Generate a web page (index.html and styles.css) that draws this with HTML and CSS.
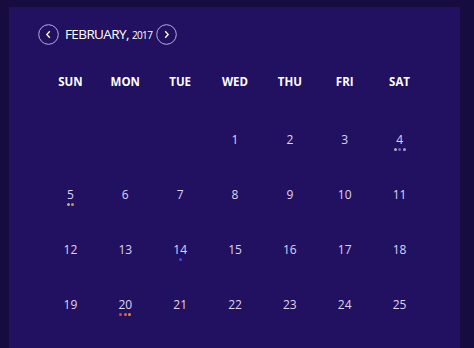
FILE: index.html
```html
<!DOCTYPE html>
<html>
<head>
<meta charset="utf-8">
<link rel="stylesheet" href="styles.css">
</head>
<body>
<div class="panel">
  <div class="header">
    <span class="nav">
      <svg width="21" height="21" viewBox="0 0 21 21"><circle cx="10.5" cy="10.5" r="9.8" fill="none" stroke="#b9aee0" stroke-width="1"/><path d="M11.8 7.3 L8.8 10.5 L11.8 13.7" fill="none" stroke="#ffffff" stroke-width="1.3"/></svg>
    </span>
    <span class="title">FEBRUARY,<span class="year">2017</span></span>
    <span class="nav">
      <svg width="21" height="21" viewBox="0 0 21 21"><circle cx="10.5" cy="10.5" r="9.8" fill="none" stroke="#b9aee0" stroke-width="1"/><path d="M9.2 7.3 L12.2 10.5 L9.2 13.7" fill="none" stroke="#ffffff" stroke-width="1.3"/></svg>
    </span>
  </div>
  <div class="dow">
    <div>SUN</div><div>MON</div><div>TUE</div><div>WED</div><div>THU</div><div>FRI</div><div>SAT</div>
  </div>
  <div class="weeks">
    <div class="cell"></div><div class="cell"></div><div class="cell"></div>
    <div class="cell"><span class="num">1</span></div>
    <div class="cell"><span class="num">2</span></div>
    <div class="cell"><span class="num">3</span></div>
    <div class="cell"><span class="num">4</span><span class="dots"><i class="d-sage"></i><i class="d-blue"></i><i class="d-pink"></i></span></div>
    <div class="cell"><span class="num">5</span><span class="dots"><i class="d-sand"></i><i class="d-orange"></i></span></div>
    <div class="cell"><span class="num">6</span></div>
    <div class="cell"><span class="num">7</span></div>
    <div class="cell"><span class="num">8</span></div>
    <div class="cell"><span class="num">9</span></div>
    <div class="cell"><span class="num">10</span></div>
    <div class="cell"><span class="num">11</span></div>
    <div class="cell"><span class="num">12</span></div>
    <div class="cell"><span class="num">13</span></div>
    <div class="cell"><span class="num">14</span><span class="dots"><i class="d-royal"></i></span></div>
    <div class="cell"><span class="num">15</span></div>
    <div class="cell"><span class="num">16</span></div>
    <div class="cell"><span class="num">17</span></div>
    <div class="cell"><span class="num">18</span></div>
    <div class="cell"><span class="num">19</span></div>
    <div class="cell"><span class="num">20</span><span class="dots"><i class="d-red"></i><i class="d-coral"></i><i class="d-orange"></i></span></div>
    <div class="cell"><span class="num">21</span></div>
    <div class="cell"><span class="num">22</span></div>
    <div class="cell"><span class="num">23</span></div>
    <div class="cell"><span class="num">24</span></div>
    <div class="cell"><span class="num">25</span></div>
  </div>
</div>
</body>
</html>
```
FILE: styles.css
```css
html, body {
  margin: 0;
  padding: 0;
  background: #160c3f;
  overflow: hidden;
  height: 100%;
}
body {
  font-family: "Open Sans", "Noto Sans", sans-serif;
}
.panel {
  margin: 7px 14px 0 9px;
  min-height: 341px;
  background: #221160;
  padding: 17px 33px 0 34px;
  box-sizing: border-box;
}
.header {
  display: flex;
  align-items: center;
  height: 21px;
  margin-left: -5px;
}
.nav {
  display: flex;
  width: 21px;
  height: 21px;
}
.title {
  color: #ffffff;
  font-size: 13.5px;
  line-height: 21px;
  letter-spacing: -0.6px;
  margin: 0 4px 0 6px;
}
.year {
  font-size: 10px;
  letter-spacing: -0.6px;
  margin-left: 3px;
}
.dow {
  display: grid;
  grid-template-columns: repeat(7, 1fr);
  margin-top: 28px;
  height: 17px;
  line-height: 17px;
  color: #ffffff;
  font-weight: 700;
  font-size: 11.5px;
  text-align: center;
}
.weeks {
  display: grid;
  grid-template-columns: repeat(7, 1fr);
  grid-auto-rows: 55px;
  margin-top: 22px;
}
.cell {
  display: flex;
  flex-direction: column;
  align-items: center;
  padding-top: 19px;
}
.num {
  color: #ddd5f2;
  font-size: 12px;
  line-height: 17px;
}
.dots {
  display: flex;
  gap: 1.5px;
}
.dots i {
  display: block;
  width: 3px;
  height: 3px;
  border-radius: 50%;
}
.d-sage { background: #a9b79a; }
.d-blue { background: #6d63de; }
.d-pink { background: #c58ad6; }
.d-sand { background: #bdb08e; }
.d-orange { background: #e08a44; }
.d-royal { background: #3553e6; }
.d-red { background: #e0473e; }
.d-coral { background: #d06a55; }
```
